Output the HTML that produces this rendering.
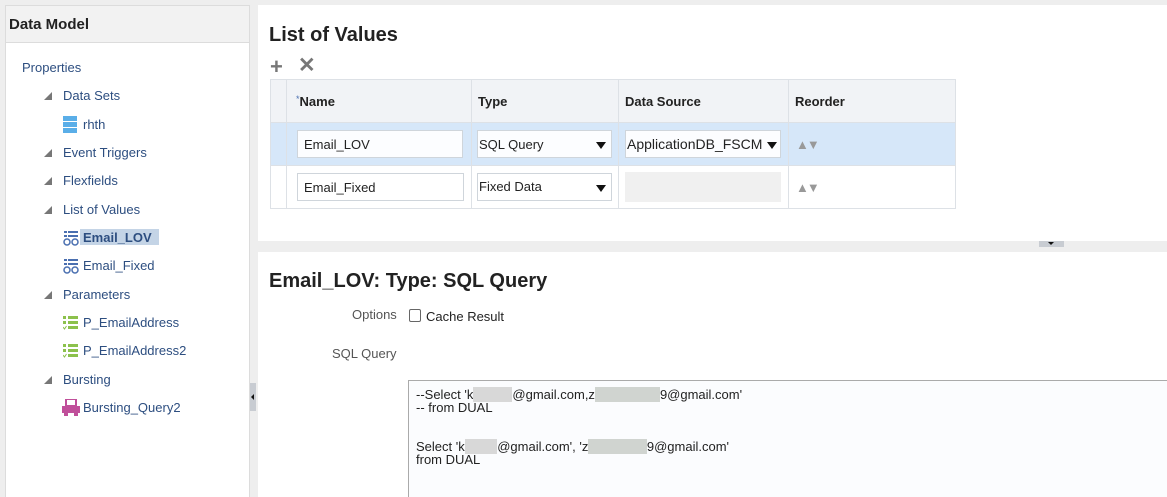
<!DOCTYPE html>
<html style="overflow:hidden;height:497px"><head><style>
*{box-sizing:border-box;margin:0;padding:0}
body{width:1167px;height:497px;background:#eeeeee;font-family:"Liberation Sans",sans-serif;position:relative;overflow:hidden;font-size:13px;color:#333}
.abs{position:absolute}
#left{left:5px;top:5px;width:245px;height:492px;background:#fff;border:1px solid #dcdcdc;border-bottom:none}
#lh{left:0;top:0;width:243px;height:37px;background:#f2f2f2;border-bottom:1px solid #dcdcdc;font-weight:bold;font-size:15px;color:#222;padding:10px 0 0 3px}
.t{position:absolute;color:#2d4e80;font-size:13px}
.tri{position:absolute;width:0;height:0;border-left:8px solid transparent;border-bottom:8px solid #777}
#top{left:258px;top:5px;width:909px;height:236px;background:#fff}
#bot{left:258px;top:252px;width:909px;height:245px;background:#fff}
h2{position:absolute;font-size:20px;font-weight:bold;color:#222}
table{position:absolute;border-collapse:collapse;left:270px;top:79px;table-layout:fixed}
td{border:1px solid #dde1e6;padding:0;vertical-align:middle}
th{border:1px solid #dde1e6;background:#f1f3f6;text-align:left;font-size:13px;color:#222;padding-left:7px;height:43px}
.inp{background:#fcfdff;border:1px solid #cfd5db;height:28px;font-size:13px;color:#222;padding:6px 0 0 6px;position:relative}
.arr{position:absolute;right:5px;top:11px;border-left:5px solid transparent;border-right:5px solid transparent;border-top:7px solid #111}
.ro{padding-left:7px;color:#999;font-size:13px;letter-spacing:-2px}
</style></head><body>
<div id="left" class="abs">
<div id="lh" class="abs">Data Model</div>
</div>
<div class="t" style="left:22px;top:60px">Properties</div>
<div class="tri" style="left:44px;top:92px"></div><div class="t" style="left:63px;top:88px">Data Sets</div>
<svg class="abs" style="left:63px;top:116px" width="14" height="18"><rect x="0" y="0" width="14" height="5" fill="#5aaee8"/><rect x="0" y="6" width="14" height="5" fill="#5aaee8"/><rect x="0" y="12" width="14" height="5" fill="#5aaee8"/></svg>
<div class="t" style="left:83px;top:117px">rhth</div>
<div class="tri" style="left:44px;top:149px"></div><div class="t" style="left:63px;top:145px">Event Triggers</div>
<div class="tri" style="left:44px;top:177px"></div><div class="t" style="left:63px;top:173px">Flexfields</div>
<div class="tri" style="left:44px;top:206px"></div><div class="t" style="left:63px;top:202px">List of Values</div>
<svg class="abs" style="left:62px;top:230px" width="18" height="16"><rect x="2" y="1" width="3" height="2" fill="#4a6fb0"/><rect x="6" y="1" width="10" height="2" fill="#4a6fb0"/><rect x="2" y="5" width="3" height="2" fill="#4a6fb0"/><rect x="6" y="5" width="10" height="2" fill="#4a6fb0"/><circle cx="5" cy="12" r="3" fill="none" stroke="#4a6fb0" stroke-width="1.5"/><circle cx="13" cy="12" r="3" fill="none" stroke="#4a6fb0" stroke-width="1.5"/></svg>
<div class="abs" style="left:80px;top:229px;width:79px;height:16px;background:#c4d4e6"></div>
<div class="t" style="left:83px;top:230px;font-weight:bold">Email_LOV</div>
<svg class="abs" style="left:62px;top:258px" width="18" height="16"><rect x="2" y="1" width="3" height="2" fill="#4a6fb0"/><rect x="6" y="1" width="10" height="2" fill="#4a6fb0"/><rect x="2" y="5" width="3" height="2" fill="#4a6fb0"/><rect x="6" y="5" width="10" height="2" fill="#4a6fb0"/><circle cx="5" cy="12" r="3" fill="none" stroke="#4a6fb0" stroke-width="1.5"/><circle cx="13" cy="12" r="3" fill="none" stroke="#4a6fb0" stroke-width="1.5"/></svg>
<div class="t" style="left:83px;top:258px">Email_Fixed</div>
<div class="tri" style="left:44px;top:291px"></div><div class="t" style="left:63px;top:287px">Parameters</div>
<svg class="abs" style="left:63px;top:315px" width="16" height="16"><rect x="0" y="1" width="3" height="3" fill="#8cc14c"/><rect x="5" y="1" width="10" height="3" fill="#8cc14c"/><rect x="0" y="6" width="3" height="3" fill="#8cc14c"/><rect x="5" y="6" width="10" height="3" fill="#8cc14c"/><rect x="5" y="11" width="10" height="3" fill="#8cc14c"/><path d="M0 12l1.5 2 2-3" stroke="#8cc14c" fill="none"/></svg>
<div class="t" style="left:83px;top:315px">P_EmailAddress</div>
<svg class="abs" style="left:63px;top:343px" width="16" height="16"><rect x="0" y="1" width="3" height="3" fill="#8cc14c"/><rect x="5" y="1" width="10" height="3" fill="#8cc14c"/><rect x="0" y="6" width="3" height="3" fill="#8cc14c"/><rect x="5" y="6" width="10" height="3" fill="#8cc14c"/><rect x="5" y="11" width="10" height="3" fill="#8cc14c"/><path d="M0 12l1.5 2 2-3" stroke="#8cc14c" fill="none"/></svg>
<div class="t" style="left:83px;top:343px">P_EmailAddress2</div>
<div class="tri" style="left:44px;top:376px"></div><div class="t" style="left:63px;top:372px">Bursting</div>
<svg class="abs" style="left:62px;top:399px" width="18" height="17"><rect x="4" y="0" width="10" height="7" fill="none" stroke="#c04f9a" stroke-width="2"/><rect x="0" y="7" width="18" height="7" fill="#c04f9a"/><rect x="2" y="14" width="4" height="3" fill="#c04f9a"/><rect x="12" y="14" width="4" height="3" fill="#c04f9a"/></svg>
<div class="t" style="left:83px;top:400px">Bursting_Query2</div>
<div class="abs" style="left:250px;top:383px;width:6px;height:28px;background:#c8ccd2"></div>
<div class="abs" style="left:251px;top:394px;border-top:3px solid transparent;border-bottom:3px solid transparent;border-right:3px solid #111"></div>

<div id="top" class="abs"></div>
<h2 style="left:269px;top:24px">List of Values</h2>
<div class="abs" style="left:270px;top:57px;font-size:22px;font-weight:bold;color:#777;line-height:20px">+</div>
<div class="abs" style="left:298px;top:56px;font-size:21px;font-weight:bold;color:#777;line-height:20px">✕</div>
<table>
<colgroup><col style="width:16px"><col style="width:185px"><col style="width:147px"><col style="width:170px"><col style="width:167px"></colgroup>
<tr><th style="padding:0"></th><th style="padding-left:9px"><span style="color:#4a6fb0;font-weight:normal;font-size:9px;vertical-align:top">*</span>Name</th><th style="padding-left:6px">Type</th><th style="padding-left:6px">Data Source</th><th style="padding-left:6px">Reorder</th></tr>
<tr style="background:#d6e7f9;height:43px"><td></td><td style="padding-left:10px"><div class="inp" style="width:166px">Email_LOV</div></td><td style="padding-left:5px"><div class="inp" style="width:135px;padding-left:1px">SQL Query<span class="arr"></span></div></td><td style="padding-left:6px"><div class="inp" style="width:156px;padding-left:1px;font-size:14px;padding-top:5px;overflow:hidden;white-space:nowrap">ApplicationDB_FSCM<span class="arr" style="right:3px;background:#fcfdff"></span></div></td><td class="ro">▲▼</td></tr>
<tr style="height:43px;background:#fff"><td></td><td style="padding-left:10px"><div class="inp" style="width:167px;background:#fff">Email_Fixed</div></td><td style="padding-left:5px"><div class="inp" style="width:135px;padding-left:1px;padding-top:5px;background:#fff">Fixed Data<span class="arr"></span></div></td><td style="padding-left:6px"><div style="width:156px;height:30px;background:#f0f0f0"></div></td><td class="ro">▲▼</td></tr>
</table>
<div class="abs" style="left:1039px;top:241px;width:25px;height:6px;background:#c8ccd2"></div>
<div class="abs" style="left:1048px;top:242px;border-left:3px solid transparent;border-right:3px solid transparent;border-top:3px solid #111"></div>

<div id="bot" class="abs"></div>
<h2 style="left:269px;top:270px">Email_LOV: Type: SQL Query</h2>
<div class="abs" style="left:352px;top:307px;color:#555">Options</div>
<div class="abs" style="left:409px;top:309px;width:12px;height:13px;border:1px solid #666;border-radius:2px;background:#fff"></div>
<div class="abs" style="left:426px;top:309px;color:#222">Cache Result</div>
<div class="abs" style="left:332px;top:346px;color:#555">SQL Query</div>
<div class="abs" style="left:408px;top:380px;width:770px;height:130px;border:1px solid #aaa;background:#fbfcfe;padding:7px 0 0 7px;font-size:13px;line-height:13px;color:#222">--Select 'k<span style="background:#d8d8d8;color:transparent">xxxxxx</span>@gmail.com,z<span style="background:#d0d4d0;color:transparent">xxxxxxxxxx</span>9@gmail.com'<br>-- from DUAL<br><br><br>Select 'k<span style="background:#d8d8d8;color:transparent">xxxxx</span>@gmail.com', 'z<span style="background:#d0d4d0;color:transparent">xxxxxxxxx</span>9@gmail.com'<br>from DUAL</div>
</body></html>
